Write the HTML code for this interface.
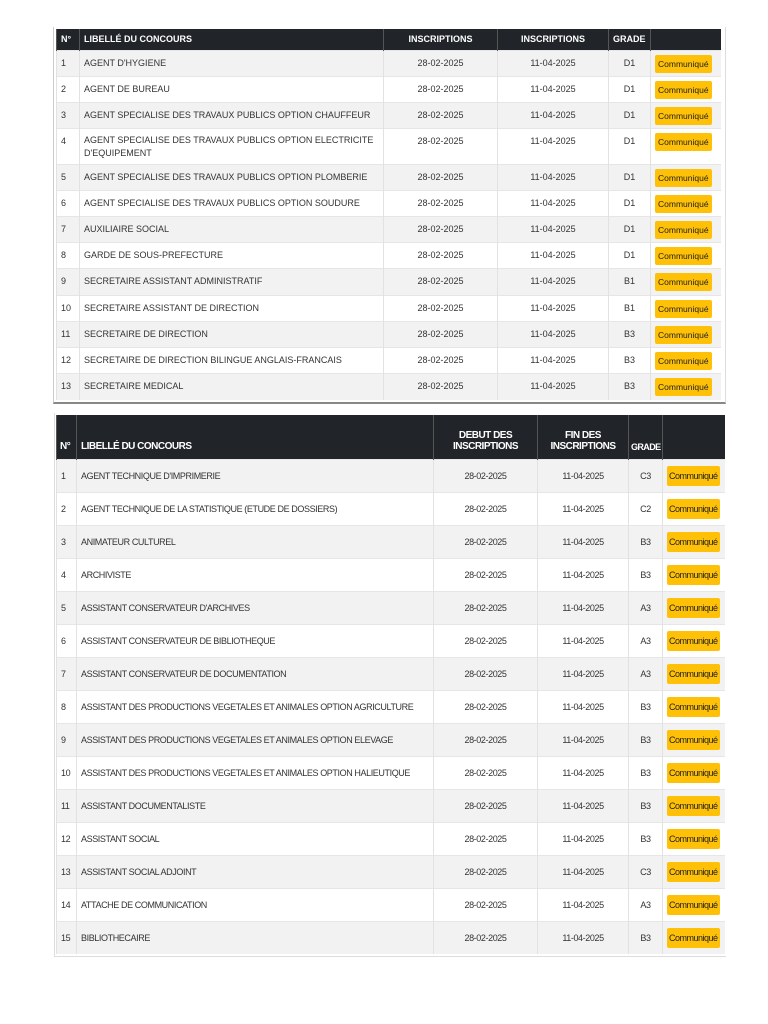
<!DOCTYPE html>
<html><head><meta charset="utf-8">
<style>
body{margin:0;width:768px;height:1024px;background:#fff;position:relative;font-family:"Liberation Sans",sans-serif;color:#333;overflow:hidden}
table{border-collapse:collapse;position:absolute;table-layout:fixed}
td,th{padding:0 4px;font-size:9px;white-space:nowrap;overflow:hidden}
th{background:#212529;color:#fff;font-weight:bold;text-align:left;border-left:1px solid #555}
th.c,td.c{text-align:center}
tr.g td{background:#f2f2f2}
td{border-left:1px solid #e2e2e2;border-top:1px solid #e6e6e6}
.b{display:inline-block;background:#ffc107;color:#222;border-radius:2px}
#t1 td{vertical-align:top;padding-top:7px}
#t1 .b{font-size:8.5px;padding:4px 3px;margin-top:-3px}
#t2 td{font-size:9px;letter-spacing:-0.4px;vertical-align:middle}
#t2 th{font-size:10px;letter-spacing:-0.5px;vertical-align:bottom;padding-bottom:7px}
#t2 .b{font-size:9px;padding:5px 2px;letter-spacing:-0.5px}
.frame1{position:absolute;left:53px;top:27px;width:671px;height:375px;border-left:1px solid #ccc;border-right:1px solid #ddd;border-bottom:2px solid #888}
.frame2{position:absolute;left:54px;top:413px;width:671px;height:543px;border-left:1px solid #ddd;border-bottom:1px solid #ddd}
</style></head><body>
<div class="frame1"></div>
<div class="frame2"></div>
<table id="t1" style="left:56px;top:29px;width:664px">
<colgroup><col style="width:23px"><col style="width:304px"><col style="width:114px"><col style="width:111px"><col style="width:42px"><col style="width:70px"></colgroup>
<tr style="height:21px"><th>N°</th><th>LIBELLÉ DU CONCOURS</th><th class="c">INSCRIPTIONS</th><th class="c">INSCRIPTIONS</th><th>GRADE</th><th></th></tr>
<tr class="g" style="height:26px"><td>1</td><td>AGENT D'HYGIENE</td><td class="c">28-02-2025</td><td class="c">11-04-2025</td><td class="c">D1</td><td><span class="b">Communiqué</span></td></tr>
<tr style="height:26px"><td>2</td><td>AGENT DE BUREAU</td><td class="c">28-02-2025</td><td class="c">11-04-2025</td><td class="c">D1</td><td><span class="b">Communiqué</span></td></tr>
<tr class="g" style="height:26px"><td>3</td><td>AGENT SPECIALISE DES TRAVAUX PUBLICS OPTION CHAUFFEUR</td><td class="c">28-02-2025</td><td class="c">11-04-2025</td><td class="c">D1</td><td><span class="b">Communiqué</span></td></tr>
<tr style="height:36px"><td>4</td><td style="white-space:normal;line-height:13px;padding-top:5px">AGENT SPECIALISE DES TRAVAUX PUBLICS OPTION ELECTRICITE D'EQUIPEMENT</td><td class="c">28-02-2025</td><td class="c">11-04-2025</td><td class="c">D1</td><td><span class="b">Communiqué</span></td></tr>
<tr class="g" style="height:26px"><td>5</td><td>AGENT SPECIALISE DES TRAVAUX PUBLICS OPTION PLOMBERIE</td><td class="c">28-02-2025</td><td class="c">11-04-2025</td><td class="c">D1</td><td><span class="b">Communiqué</span></td></tr>
<tr style="height:26px"><td>6</td><td>AGENT SPECIALISE DES TRAVAUX PUBLICS OPTION SOUDURE</td><td class="c">28-02-2025</td><td class="c">11-04-2025</td><td class="c">D1</td><td><span class="b">Communiqué</span></td></tr>
<tr class="g" style="height:26px"><td>7</td><td>AUXILIAIRE SOCIAL</td><td class="c">28-02-2025</td><td class="c">11-04-2025</td><td class="c">D1</td><td><span class="b">Communiqué</span></td></tr>
<tr style="height:26px"><td>8</td><td>GARDE DE SOUS-PREFECTURE</td><td class="c">28-02-2025</td><td class="c">11-04-2025</td><td class="c">D1</td><td><span class="b">Communiqué</span></td></tr>
<tr class="g" style="height:27px"><td>9</td><td>SECRETAIRE ASSISTANT ADMINISTRATIF</td><td class="c">28-02-2025</td><td class="c">11-04-2025</td><td class="c">B1</td><td><span class="b">Communiqué</span></td></tr>
<tr style="height:26px"><td>10</td><td>SECRETAIRE ASSISTANT DE DIRECTION</td><td class="c">28-02-2025</td><td class="c">11-04-2025</td><td class="c">B1</td><td><span class="b">Communiqué</span></td></tr>
<tr class="g" style="height:26px"><td>11</td><td>SECRETAIRE DE DIRECTION</td><td class="c">28-02-2025</td><td class="c">11-04-2025</td><td class="c">B3</td><td><span class="b">Communiqué</span></td></tr>
<tr style="height:26px"><td>12</td><td>SECRETAIRE DE DIRECTION BILINGUE ANGLAIS-FRANCAIS</td><td class="c">28-02-2025</td><td class="c">11-04-2025</td><td class="c">B3</td><td><span class="b">Communiqué</span></td></tr>
<tr class="g" style="height:27px"><td>13</td><td>SECRETAIRE MEDICAL</td><td class="c">28-02-2025</td><td class="c">11-04-2025</td><td class="c">B3</td><td><span class="b">Communiqué</span></td></tr>
</table>

<table id="t2" style="left:56px;top:415px;width:668px">
<colgroup><col style="width:20px"><col style="width:357px"><col style="width:104px"><col style="width:91px"><col style="width:34px"><col style="width:62px"></colgroup>
<tr style="height:44px"><th style="padding:0 3px 7px">N°</th><th>LIBELLÉ DU CONCOURS</th><th class="c">DEBUT DES<br>INSCRIPTIONS</th><th class="c">FIN DES<br>INSCRIPTIONS</th><th style="padding:0 1px 7px 2px;font-size:9px;letter-spacing:-0.6px">GRADE</th><th></th></tr>
<tr class="g" style="height:33px"><td>1</td><td>AGENT TECHNIQUE D'IMPRIMERIE</td><td class="c">28-02-2025</td><td class="c">11-04-2025</td><td class="c">C3</td><td><span class="b">Communiqué</span></td></tr>
<tr style="height:33px"><td>2</td><td>AGENT TECHNIQUE DE LA STATISTIQUE (ETUDE DE DOSSIERS)</td><td class="c">28-02-2025</td><td class="c">11-04-2025</td><td class="c">C2</td><td><span class="b">Communiqué</span></td></tr>
<tr class="g" style="height:33px"><td>3</td><td>ANIMATEUR CULTUREL</td><td class="c">28-02-2025</td><td class="c">11-04-2025</td><td class="c">B3</td><td><span class="b">Communiqué</span></td></tr>
<tr style="height:33px"><td>4</td><td>ARCHIVISTE</td><td class="c">28-02-2025</td><td class="c">11-04-2025</td><td class="c">B3</td><td><span class="b">Communiqué</span></td></tr>
<tr class="g" style="height:33px"><td>5</td><td>ASSISTANT CONSERVATEUR D'ARCHIVES</td><td class="c">28-02-2025</td><td class="c">11-04-2025</td><td class="c">A3</td><td><span class="b">Communiqué</span></td></tr>
<tr style="height:33px"><td>6</td><td>ASSISTANT CONSERVATEUR DE BIBLIOTHEQUE</td><td class="c">28-02-2025</td><td class="c">11-04-2025</td><td class="c">A3</td><td><span class="b">Communiqué</span></td></tr>
<tr class="g" style="height:33px"><td>7</td><td>ASSISTANT CONSERVATEUR DE DOCUMENTATION</td><td class="c">28-02-2025</td><td class="c">11-04-2025</td><td class="c">A3</td><td><span class="b">Communiqué</span></td></tr>
<tr style="height:33px"><td>8</td><td>ASSISTANT DES PRODUCTIONS VEGETALES ET ANIMALES OPTION AGRICULTURE</td><td class="c">28-02-2025</td><td class="c">11-04-2025</td><td class="c">B3</td><td><span class="b">Communiqué</span></td></tr>
<tr class="g" style="height:33px"><td>9</td><td>ASSISTANT DES PRODUCTIONS VEGETALES ET ANIMALES OPTION ELEVAGE</td><td class="c">28-02-2025</td><td class="c">11-04-2025</td><td class="c">B3</td><td><span class="b">Communiqué</span></td></tr>
<tr style="height:33px"><td>10</td><td>ASSISTANT DES PRODUCTIONS VEGETALES ET ANIMALES OPTION HALIEUTIQUE</td><td class="c">28-02-2025</td><td class="c">11-04-2025</td><td class="c">B3</td><td><span class="b">Communiqué</span></td></tr>
<tr class="g" style="height:33px"><td>11</td><td>ASSISTANT DOCUMENTALISTE</td><td class="c">28-02-2025</td><td class="c">11-04-2025</td><td class="c">B3</td><td><span class="b">Communiqué</span></td></tr>
<tr style="height:33px"><td>12</td><td>ASSISTANT SOCIAL</td><td class="c">28-02-2025</td><td class="c">11-04-2025</td><td class="c">B3</td><td><span class="b">Communiqué</span></td></tr>
<tr class="g" style="height:33px"><td>13</td><td>ASSISTANT SOCIAL ADJOINT</td><td class="c">28-02-2025</td><td class="c">11-04-2025</td><td class="c">C3</td><td><span class="b">Communiqué</span></td></tr>
<tr style="height:33px"><td>14</td><td>ATTACHE DE COMMUNICATION</td><td class="c">28-02-2025</td><td class="c">11-04-2025</td><td class="c">A3</td><td><span class="b">Communiqué</span></td></tr>
<tr class="g" style="height:33px"><td>15</td><td>BIBLIOTHECAIRE</td><td class="c">28-02-2025</td><td class="c">11-04-2025</td><td class="c">B3</td><td><span class="b">Communiqué</span></td></tr>
</table>
</body></html>
